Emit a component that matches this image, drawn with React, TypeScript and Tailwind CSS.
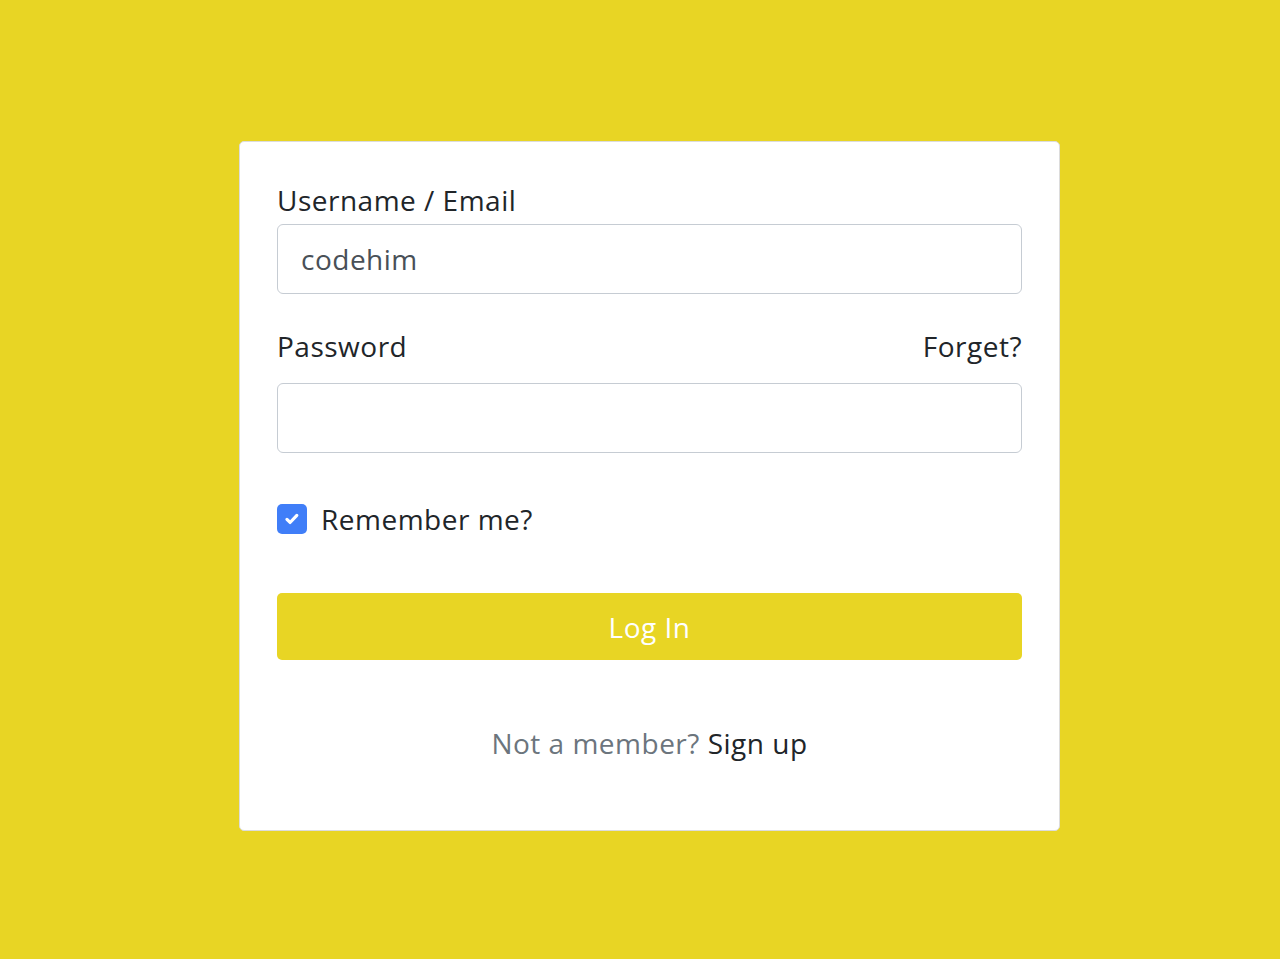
import React, { useState } from 'react';

export default function App() {
  const [user, setUser] = useState('codehim');
  const [pass, setPass] = useState('');
  const [remember, setRemember] = useState(true);

  return (
    <div className="min-h-[959px] w-full bg-[#e8d524] flex justify-center pt-[141px] pl-[19px] tracking-[0.5px] font-['Open_Sans','Noto_Sans',sans-serif]">
      <div className="w-[821px] h-[690px] bg-white border border-[#dcdcdc] rounded-[5px] px-[37px] pt-[37px]">
        {/* Username */}
        <label className="block text-[28px] leading-[42px] text-[#212529]">Username / Email</label>
        <input
          value={user}
          onChange={(e) => setUser(e.target.value)}
          className="mt-[3px] block w-full h-[70px] border border-[#c6ccd3] rounded-[6px] px-[23px] text-[28px] text-[#495057] outline-none"
        />

        {/* Password */}
        <div className="mt-[31px] flex justify-between items-center">
          <label className="text-[28px] leading-[42px] text-[#212529]">Password</label>
          <a className="text-[28px] leading-[42px] text-[#212529]">Forget?</a>
        </div>
        <input
          type="password"
          value={pass}
          onChange={(e) => setPass(e.target.value)}
          className="mt-[16px] block w-full h-[70px] border border-[#c6ccd3] rounded-[6px] px-[23px] text-[28px] text-[#495057] outline-none"
        />

        {/* Remember */}
        <div className="mt-[45px] flex items-center gap-[14px] h-[42px]">
          <button
            onClick={() => setRemember(!remember)}
            className={`w-[30px] h-[30px] rounded-[5px] flex items-center justify-center ${remember ? 'bg-[#407ef8]' : 'bg-white border border-[#adb5bd]'}`}
          >
            {remember && (
              <svg width="18" height="18" viewBox="0 0 16 16" fill="none">
                <path d="M3.5 8.3l2.8 2.8 6-6.3" stroke="white" strokeWidth="2.8" strokeLinecap="round" strokeLinejoin="round" />
              </svg>
            )}
          </button>
          <span className="text-[28px] leading-[42px] text-[#212529]">Remember me?</span>
        </div>

        {/* Button */}
        <button className="mt-[53px] w-full h-[67px] bg-[#e8d524] rounded-[5px] text-white text-[28px]">Log In</button>

        {/* Footer */}
        <p className="mt-[62px] text-center text-[28px] leading-[42px]">
          <span className="text-[#6c757d]">Not a member? </span>
          <a className="text-[#212529]">Sign up</a>
        </p>
      </div>
    </div>
  );
}
